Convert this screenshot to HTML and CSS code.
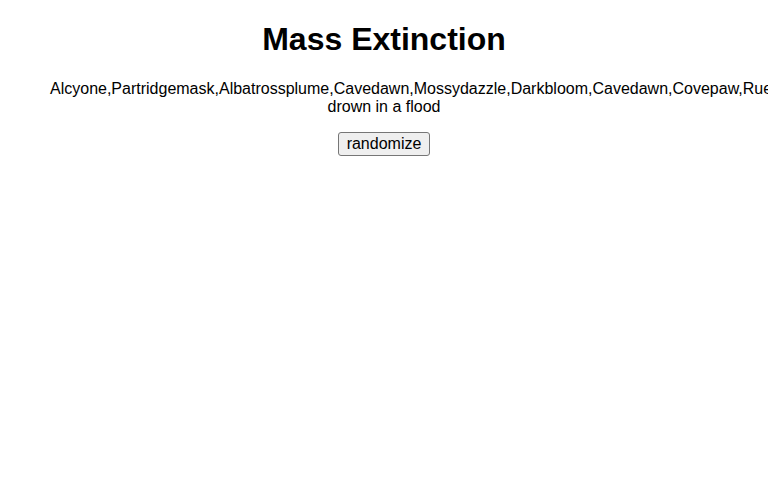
FILE: index.html
```html
<!DOCTYPE html>
<html>
<head>
<meta charset="utf-8">
<title>Mass Extinction</title>
<link rel="stylesheet" href="styles.css">
</head>
<body>
<main class="page">
  <h1 class="title">Mass Extinction</h1>
  <p class="names">Alcyone,Partridgemask,Albatrossplume,Cavedawn,Mossydazzle,Darkbloom,Cavedawn,Covepaw,Ruefrost,Ashenwing,Fernshade drown in a flood</p>
  <button class="randomize" type="button">randomize</button>
</main>
</body>
</html>
```
FILE: styles.css
```css
body {
  margin: 0;
  font-family: "Liberation Sans", Arial, sans-serif;
  color: #000;
  background: #fff;
}
.page {
  text-align: center;
  padding: 0 8px;
}
.title {
  font-size: 32px;
  font-weight: bold;
  margin: 21.44px 0;
}
.names {
  font-size: 16px;
  margin: 16px 0;
  padding: 0 42px;
}
.randomize {
  box-sizing: border-box;
  height: 24px;
  font-family: "Liberation Sans", Arial, sans-serif;
  font-size: 16px;
  line-height: 18px;
  color: #000;
  background: #efefef;
  border: 1px solid #767676;
  border-radius: 3px;
  padding: 0 7.5px;
}
```
